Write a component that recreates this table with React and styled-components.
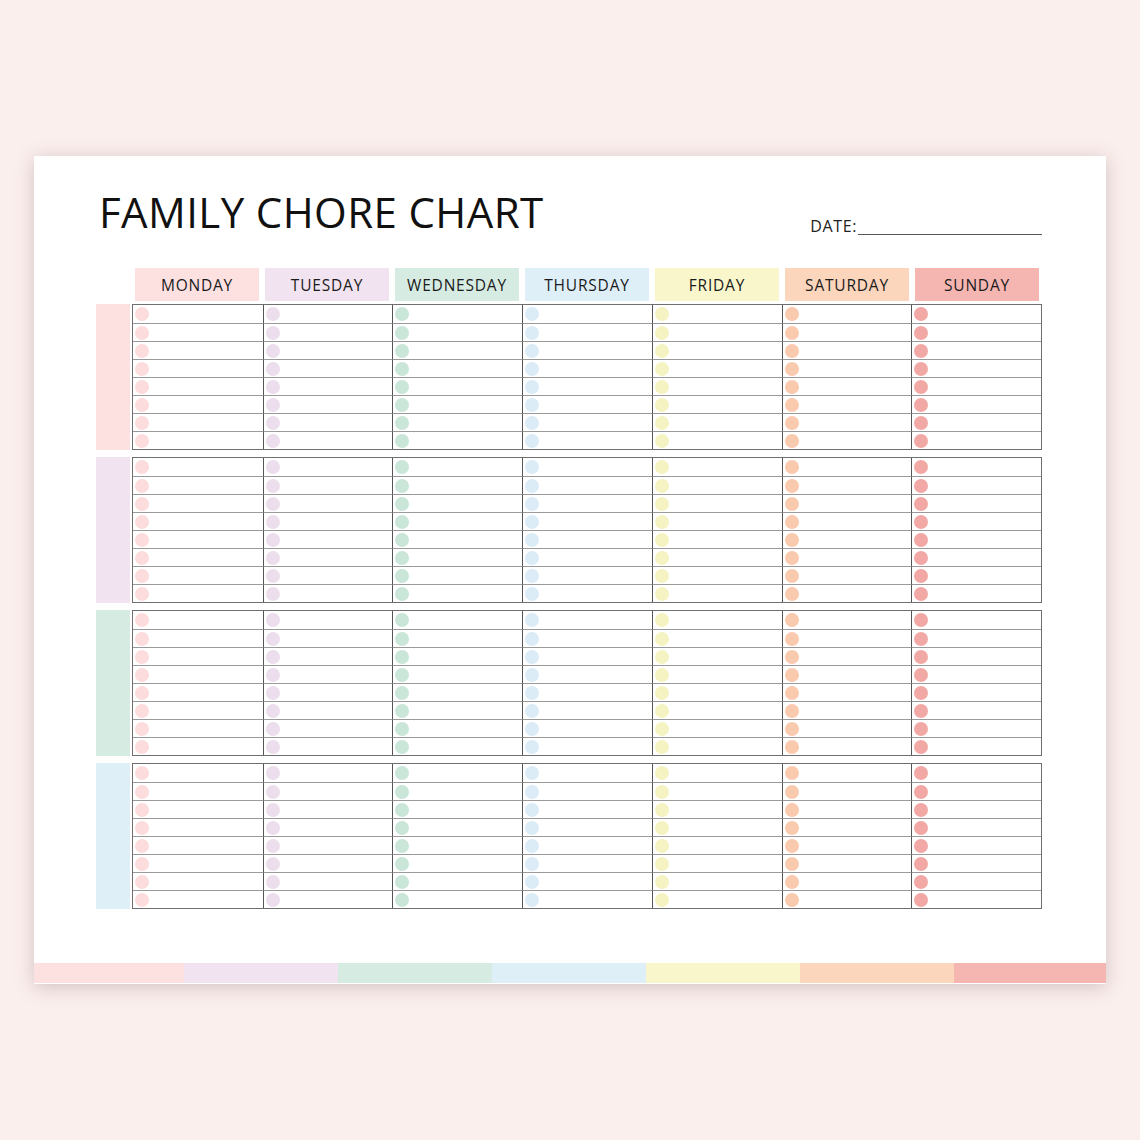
import React from "react";
import styled, { createGlobalStyle } from "styled-components";

const GlobalStyle = createGlobalStyle`
  html, body { margin: 0; padding: 0; background: #fbefee; }
  body { font-family: "Open Sans", "Liberation Sans", sans-serif; color: #111; }
`;

const DAYS = [
  { name: "MONDAY", bg: "#fde1e1", dot: "#fcdcdc" },
  { name: "TUESDAY", bg: "#f1e4f0", dot: "#ecdeec" },
  { name: "WEDNESDAY", bg: "#d6ece3", dot: "#c9e6d9" },
  { name: "THURSDAY", bg: "#dfeff8", dot: "#dbecf7" },
  { name: "FRIDAY", bg: "#f9f6cc", dot: "#f5f3c2" },
  { name: "SATURDAY", bg: "#fcd6bc", dot: "#f9caad" },
  { name: "SUNDAY", bg: "#f5b6b2", dot: "#f2a9a6" },
];

const GROUPS = ["#fde1e1", "#f1e4f0", "#d6ece3", "#dfeff8"];

const STRIPES = [
  { c: "#fde1e1", w: 150 },
  { c: "#f1e4f0", w: 154 },
  { c: "#d6ece3", w: 154 },
  { c: "#dfeff8", w: 154 },
  { c: "#f9f6cc", w: 154 },
  { c: "#fcd6bc", w: 154 },
  { c: "#f5b6b2", w: 152 },
];

const Page = styled.div`
  width: 1140px;
  height: 1140px;
  padding: 156px 0 0 34px;
  box-sizing: border-box;
`;

const Sheet = styled.div`
  width: 1072px;
  height: 828px;
  background: #fff;
  box-shadow: 0 3px 18px rgba(110, 90, 90, 0.3);
  display: flex;
  flex-direction: column;
`;

const Content = styled.div`
  flex: 1;
  padding: 0 0 0 62px;
  display: flex;
  flex-direction: column;
`;

const TitleRow = styled.div`
  display: flex;
  align-items: flex-start;
  height: 112px;
`;

const Title = styled.h1`
  margin: 31px 0 0 3px;
  font-family: "Open Sans", sans-serif;
  font-weight: 400;
  font-size: 42px;
  line-height: 50px;
  letter-spacing: 0.4px;
  color: #111;
  white-space: nowrap;
`;

const DateBox = styled.div`
  margin: 61px 64px 0 auto;
  display: flex;
  align-items: flex-end;
  font-size: 16px;
  letter-spacing: 0.6px;
  line-height: 18px;
  color: #222;
`;

const DateLine = styled.span`
  display: inline-block;
  width: 184px;
  height: 15px;
  border-bottom: 1px solid #555;
  margin-left: 1px;
`;

const HeaderRow = styled.div`
  display: grid;
  grid-template-columns: repeat(7, 130px);
  margin-left: 36px;
  height: 33px;
  margin-bottom: 3px;
`;

const HeaderCell = styled.div`
  margin: 0 3px;
  background: ${(p) => p.$bg};
  display: flex;
  align-items: center;
  justify-content: center;
  font-size: 15.5px;
  letter-spacing: 0.8px;
  color: #1a1a1a;
  padding-top: 1px;
`;

const Groups = styled.div`
  display: flex;
  flex-direction: column;
  gap: 7px;
`;

const Group = styled.div`
  display: flex;
  gap: 2px;
`;

const SideBar = styled.div`
  width: 34px;
  background: ${(p) => p.$bg};
`;

const Block = styled.div`
  width: 910px;
  box-sizing: border-box;
  border: 1px solid #6f6f6f;
  display: grid;
  grid-template-columns: repeat(7, 1fr);
`;

const Cell = styled.div`
  height: 18px;
  box-sizing: border-box;
  display: flex;
  align-items: center;
  padding-left: 2px;
  border-left: ${(p) => (p.$firstCol ? "none" : "1px solid #555")};
  border-top: ${(p) => (p.$firstRow ? "none" : "1px solid #9a9a9a")};
`;

const Dot = styled.span`
  width: 14px;
  height: 14px;
  border-radius: 50%;
  background: ${(p) => p.$c};
`;

const Stripe = styled.div`
  display: flex;
  height: 20px;
  margin-bottom: 1px;
`;

const StripeSeg = styled.div`
  width: ${(p) => p.$w}px;
  background: ${(p) => p.$c};
`;

export default function App() {
  const rows = Array.from({ length: 8 });
  return (
    <>
      <GlobalStyle />
      <Page>
        <Sheet>
          <Content>
            <TitleRow>
              <Title>FAMILY CHORE CHART</Title>
              <DateBox>
                DATE:<DateLine />
              </DateBox>
            </TitleRow>
            <HeaderRow>
              {DAYS.map((d) => (
                <HeaderCell key={d.name} $bg={d.bg}>
                  {d.name}
                </HeaderCell>
              ))}
            </HeaderRow>
            <Groups>
              {GROUPS.map((g, gi) => (
                <Group key={gi}>
                  <SideBar $bg={g} />
                  <Block>
                    {rows.map((_, ri) =>
                      DAYS.map((d, di) => (
                        <Cell
                          key={`${ri}-${di}`}
                          $firstCol={di === 0}
                          $firstRow={ri === 0}
                        >
                          <Dot $c={d.dot} />
                        </Cell>
                      ))
                    )}
                  </Block>
                </Group>
              ))}
            </Groups>
          </Content>
          <Stripe>
            {STRIPES.map((s, i) => (
              <StripeSeg key={i} $c={s.c} $w={s.w} />
            ))}
          </Stripe>
        </Sheet>
      </Page>
    </>
  );
}
